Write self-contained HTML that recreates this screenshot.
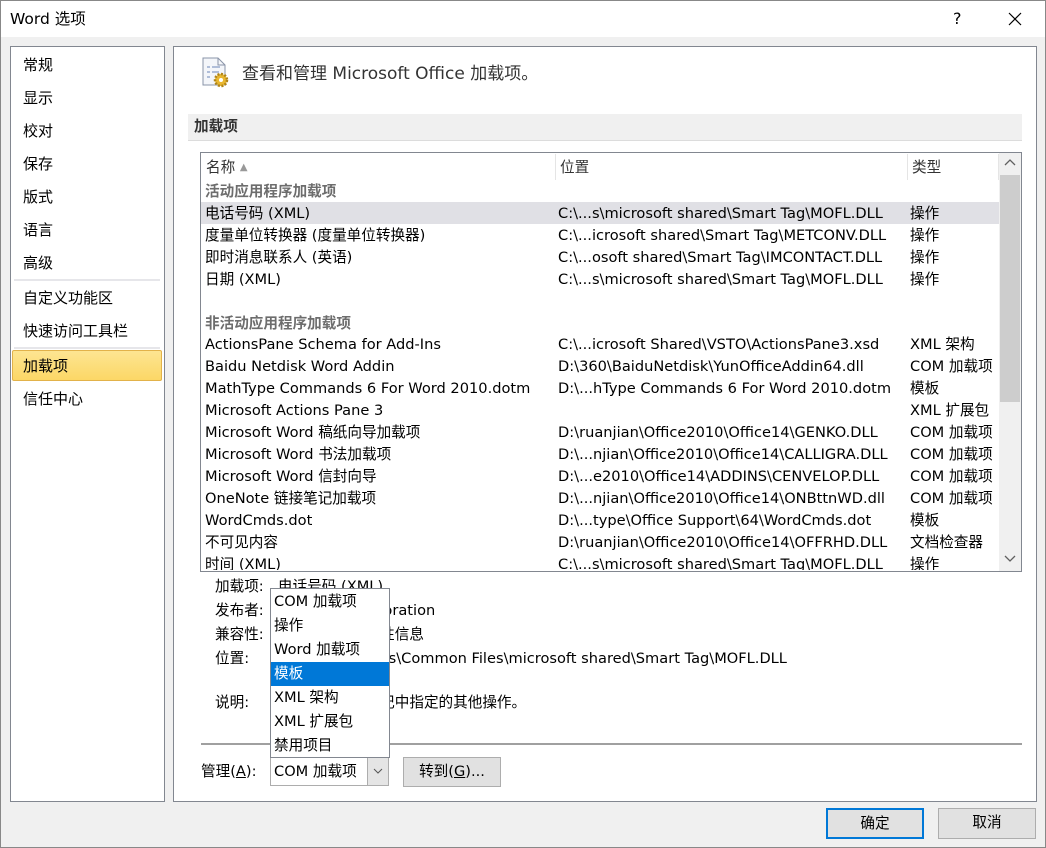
<!DOCTYPE html>
<html><head><meta charset="utf-8"><style>
*{margin:0;padding:0;box-sizing:border-box}
body{width:1046px;height:848px;background:#f0f0f0;font-family:"DejaVu Sans","Noto Sans CJK SC",sans-serif;font-size:14.6px;color:#000;position:relative;overflow:hidden}
.a{position:absolute;white-space:nowrap;line-height:22px}
#title{position:absolute;left:0;top:0;width:1046px;height:37px;background:#fff;border-top:1px solid #888;border-left:1px solid #888;border-right:1px solid #888}
#win{position:absolute;left:0;top:0;width:1046px;height:848px;border:1px solid #888;border-top:none;pointer-events:none}
.panel{position:absolute;background:#fff;border:1px solid #828790}
.nav{position:absolute;left:23px;line-height:22px;font-size:15px}
.sep{position:absolute;height:2px;background:#e6e6ea}
.row{position:absolute;left:201px;width:798px;height:22px;line-height:22px}
.row span{position:absolute;white-space:nowrap;top:1px}
.c1{left:4px}.c2{left:357px}.c3{left:709px}
.grp{color:#6d6d6d;font-weight:bold}
.btn{position:absolute;background:#e1e1e1;border:1px solid #adadad;text-align:center;line-height:28px}
.dd div{height:24px;line-height:24px;padding-left:3px}
</style></head><body>
<div id="title"></div>
<div class="a" style="left:10px;top:8px;font-size:15.5px">Word 选项</div>
<div class="a" style="left:953px;top:8px;font-size:16px">?</div>
<svg style="position:absolute;left:1008px;top:12px" width="14" height="14"><path d="M1 1L13 13M13 1L1 13" stroke="#000" stroke-width="1.2"/></svg>

<div class="panel" style="left:10px;top:46px;width:155px;height:756px"></div>
<div class="nav" style="top:54px">常规</div>
<div class="nav" style="top:87px">显示</div>
<div class="nav" style="top:120px">校对</div>
<div class="nav" style="top:153px">保存</div>
<div class="nav" style="top:186px">版式</div>
<div class="nav" style="top:219px">语言</div>
<div class="nav" style="top:252px">高级</div>
<div class="sep" style="left:14px;top:279px;width:146px"></div>
<div class="nav" style="top:287px">自定义功能区</div>
<div class="nav" style="top:320px">快速访问工具栏</div>
<div class="sep" style="left:14px;top:347px;width:146px"></div>
<div style="position:absolute;left:12px;top:350px;width:150px;height:31px;border:1px solid #e2b24a;border-radius:2px;background:linear-gradient(#fde592,#fcd766)"></div>
<div class="nav" style="top:355px">加载项</div>
<div class="nav" style="top:388px">信任中心</div>

<div class="panel" style="left:173px;top:46px;width:864px;height:756px"></div>
<svg style="position:absolute;left:201px;top:57px" width="30" height="32">
<path d="M2 1H17L24 8V28H2Z" fill="#f4f6fa" stroke="#8a94a8"/>
<path d="M17 1V8H24" fill="none" stroke="#8a94a8"/>
<g stroke="#6b86b8"><path d="M6 10H9M11 10H19M6 15H9M11 15H18M6 20H9"/></g>
<circle cx="20" cy="23" r="6" fill="#e8b730" stroke="#b08418" stroke-dasharray="2 1.5" stroke-width="2.5"/>
<circle cx="20" cy="23" r="2" fill="#fff"/>
</svg>
<div class="a" style="left:242px;top:63px;font-size:17px;color:#333">查看和管理 Microsoft Office 加载项。</div>
<div style="position:absolute;left:188px;top:114px;width:834px;height:27px;background:#f0f0f0;border-bottom:1px solid #dcdcdc"></div>
<div class="a" style="left:194px;top:116px;font-weight:bold;color:#333">加载项</div>

<div style="position:absolute;left:200px;top:152px;width:822px;height:420px;border:1px solid #828790;background:#fff"></div>
<div style="position:absolute;left:555px;top:154px;width:1px;height:26px;background:#e5e5e5"></div>
<div style="position:absolute;left:907px;top:154px;width:1px;height:26px;background:#e5e5e5"></div>
<div style="position:absolute;left:998px;top:154px;width:1px;height:26px;background:#e5e5e5"></div>
<div class="a" style="left:206px;top:157px;color:#333">名称 <span style="color:#999;font-size:10px;vertical-align:2px">▲</span></div>
<div class="a" style="left:560px;top:157px;color:#333">位置</div>
<div class="a" style="left:912px;top:157px;color:#333">类型</div>
<div style="position:absolute;left:999px;top:153px;width:22px;height:418px;background:#f0f0f0"></div>
<div style="position:absolute;left:1000px;top:175px;width:20px;height:227px;background:#cdcdcd"></div>
<svg style="position:absolute;left:1004px;top:159px" width="12" height="8"><path d="M1 6L6 1L11 6" fill="none" stroke="#606060" stroke-width="1.3"/></svg>
<svg style="position:absolute;left:1004px;top:555px" width="12" height="8"><path d="M1 1L6 6L11 1" fill="none" stroke="#606060" stroke-width="1.3"/></svg>

<div class="row grp" style="top:180px"><span class="c1">活动应用程序加载项</span></div>
<div class="row" style="top:202px;background:#e0e0e5"><span class="c1">电话号码 (XML)</span><span class="c2">C:\...s\microsoft shared\Smart Tag\MOFL.DLL</span><span class="c3">操作</span></div>
<div class="row" style="top:224px"><span class="c1">度量单位转换器 (度量单位转换器)</span><span class="c2">C:\...icrosoft shared\Smart Tag\METCONV.DLL</span><span class="c3">操作</span></div>
<div class="row" style="top:246px"><span class="c1">即时消息联系人 (英语)</span><span class="c2">C:\...osoft shared\Smart Tag\IMCONTACT.DLL</span><span class="c3">操作</span></div>
<div class="row" style="top:268px"><span class="c1">日期 (XML)</span><span class="c2">C:\...s\microsoft shared\Smart Tag\MOFL.DLL</span><span class="c3">操作</span></div>
<div class="row grp" style="top:312px"><span class="c1">非活动应用程序加载项</span></div>
<div class="row" style="top:333px"><span class="c1">ActionsPane Schema for Add-Ins</span><span class="c2">C:\...icrosoft Shared\VSTO\ActionsPane3.xsd</span><span class="c3">XML 架构</span></div>
<div class="row" style="top:355px"><span class="c1">Baidu Netdisk Word Addin</span><span class="c2">D:\360\BaiduNetdisk\YunOfficeAddin64.dll</span><span class="c3">COM 加载项</span></div>
<div class="row" style="top:377px"><span class="c1">MathType Commands 6 For Word 2010.dotm</span><span class="c2">D:\...hType Commands 6 For Word 2010.dotm</span><span class="c3">模板</span></div>
<div class="row" style="top:399px"><span class="c1">Microsoft Actions Pane 3</span><span class="c3">XML 扩展包</span></div>
<div class="row" style="top:421px"><span class="c1">Microsoft Word 稿纸向导加载项</span><span class="c2">D:\ruanjian\Office2010\Office14\GENKO.DLL</span><span class="c3">COM 加载项</span></div>
<div class="row" style="top:443px"><span class="c1">Microsoft Word 书法加载项</span><span class="c2">D:\...njian\Office2010\Office14\CALLIGRA.DLL</span><span class="c3">COM 加载项</span></div>
<div class="row" style="top:465px"><span class="c1">Microsoft Word 信封向导</span><span class="c2">D:\...e2010\Office14\ADDINS\CENVELOP.DLL</span><span class="c3">COM 加载项</span></div>
<div class="row" style="top:487px"><span class="c1">OneNote 链接笔记加载项</span><span class="c2">D:\...njian\Office2010\Office14\ONBttnWD.dll</span><span class="c3">COM 加载项</span></div>
<div class="row" style="top:509px"><span class="c1">WordCmds.dot</span><span class="c2">D:\...type\Office Support\64\WordCmds.dot</span><span class="c3">模板</span></div>
<div class="row" style="top:531px"><span class="c1">不可见内容</span><span class="c2">D:\ruanjian\Office2010\Office14\OFFRHD.DLL</span><span class="c3">文档检查器</span></div>
<div class="row" style="top:553px;height:17px;overflow:hidden"><span class="c1">时间 (XML)</span><span class="c2">C:\...s\microsoft shared\Smart Tag\MOFL.DLL</span><span class="c3">操作</span></div>

<div class="a" style="left:215px;top:576px">加载项:</div>
<div class="a" style="left:278px;top:576px">电话号码 (XML)</div>
<div class="a" style="left:215px;top:600px">发布者:</div>
<div class="a" style="left:278px;top:600px">Microsoft Corporation</div>
<div class="a" style="left:215px;top:624px">兼容性:</div>
<div class="a" style="left:278px;top:624px">没有可用的兼容性信息</div>
<div class="a" style="left:215px;top:648px">位置:</div>
<div class="a" style="left:278px;top:648px">C:\Program Files\Common Files\microsoft shared\Smart Tag\MOFL.DLL</div>
<div class="a" style="left:215px;top:692px">说明:</div>
<div class="a" style="left:278px;top:692px">在识别的智能标记中指定的其他操作。</div>
<div style="position:absolute;left:201px;top:743px;width:821px;height:2px;background:#a0a0a0"></div>

<div class="a" style="left:201px;top:761px">管理(<u>A</u>):</div>
<div style="position:absolute;left:270px;top:757px;width:119px;height:29px;background:#fff;border:1px solid #adadad"></div>
<div style="position:absolute;left:367px;top:758px;width:21px;height:27px;background:#e5e5e5;border-left:1px solid #adadad"></div>
<svg style="position:absolute;left:373px;top:768px" width="10" height="6"><path d="M1 1L5 5L9 1" fill="none" stroke="#555"/></svg>
<div class="a" style="left:274px;top:761px">COM 加载项</div>
<div class="btn" style="left:403px;top:757px;width:98px;height:30px">转到(<u>G</u>)...</div>

<div class="dd" style="position:absolute;left:270px;top:588px;width:120px;height:170px;background:#fff;border:1px solid #828790;padding-top:1px">
<div>COM 加载项</div><div>操作</div><div>Word 加载项</div><div style="background:#0078d7;color:#fff">模板</div><div>XML 架构</div><div>XML 扩展包</div><div>禁用项目</div>
</div>

<div class="btn" style="left:826px;top:808px;width:98px;height:31px;border:2px solid #0078d7">确定</div>
<div class="btn" style="left:938px;top:808px;width:98px;height:31px">取消</div>
<div id="win"></div>
</body></html>
